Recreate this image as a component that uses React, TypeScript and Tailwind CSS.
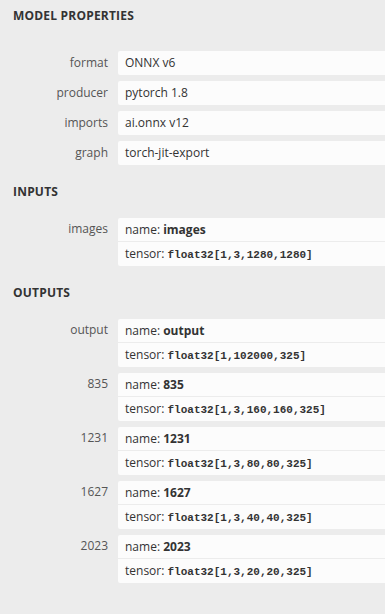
import React from 'react';

interface Attr {
    label: string;
    value: string;
}

interface Arg {
    label: string;
    name: string;
    tensor: string;
}

const props: Attr[] = [
    { label: 'format', value: 'ONNX v6' },
    { label: 'producer', value: 'pytorch 1.8' },
    { label: 'imports', value: 'ai.onnx v12' },
    { label: 'graph', value: 'torch-jit-export' },
];

const inputs: Arg[] = [
    { label: 'images', name: 'images', tensor: 'float32[1,3,1280,1280]' },
];

const outputs: Arg[] = [
    { label: 'output', name: 'output', tensor: 'float32[1,102000,325]' },
    { label: '835', name: '835', tensor: 'float32[1,3,160,160,325]' },
    { label: '1231', name: '1231', tensor: 'float32[1,3,80,80,325]' },
    { label: '1627', name: '1627', tensor: 'float32[1,3,40,40,325]' },
    { label: '2023', name: '2023', tensor: 'float32[1,3,20,20,325]' },
];

const SectionTitle: React.FC<{ title: string }> = ({ title }) => (
    <div className="px-[13px] h-[24px] flex items-center text-[12px] font-bold text-[#333] uppercase tracking-[0.2px]">
        {title}
    </div>
);

const PropRow: React.FC<{ attr: Attr }> = ({ attr }) => (
    <div className="flex items-start">
        <div className="w-[108px] shrink-0 text-right h-[24px] leading-[24px] text-[#555]">{attr.label}</div>
        <div className="ml-[10px] flex-1 bg-[#fcfcfc] rounded-l-[2px] h-[24px] leading-[24px] px-[7px] text-[#333]">
            {attr.value}
        </div>
    </div>
);

const ArgRow: React.FC<{ arg: Arg }> = ({ arg }) => (
    <div className="flex items-start">
        <div className="w-[108px] shrink-0 text-right h-[24px] leading-[22px] text-[#555]">{arg.label}</div>
        <div className="ml-[10px] flex-1 bg-[#fcfcfc] rounded-l-[2px] text-[#333]">
            <div className="h-[24px] leading-[24px] px-[7px] border-b border-[#ececec]">
                name: <span className="font-bold">{arg.name}</span>
            </div>
            <div className="h-[24px] leading-[24px] px-[7px]">
                tensor: <span className="font-bold font-['Liberation_Mono',monospace] text-[11px]">{arg.tensor}</span>
            </div>
        </div>
    </div>
);

export default function App() {
    return (
        <div className="w-[385px] h-[614px] bg-[#ececec] overflow-hidden font-['Open_Sans',sans-serif] text-[12px]">
            <div className="pt-[4px]">
                <SectionTitle title="Model Properties" />
                <div className="mt-[23px] flex flex-col gap-[6px]">
                    {props.map((p) => <PropRow key={p.label} attr={p} />)}
                </div>

                <div className="mt-[15px]">
                    <SectionTitle title="Inputs" />
                </div>
                <div className="mt-[14px] flex flex-col gap-[6px]">
                    {inputs.map((a) => <ArgRow key={a.label} arg={a} />)}
                </div>

                <div className="mt-[15px]">
                    <SectionTitle title="Outputs" />
                </div>
                <div className="mt-[14px] flex flex-col gap-[6px]">
                    {outputs.map((a) => <ArgRow key={a.label} arg={a} />)}
                </div>
            </div>
        </div>
    );
}
